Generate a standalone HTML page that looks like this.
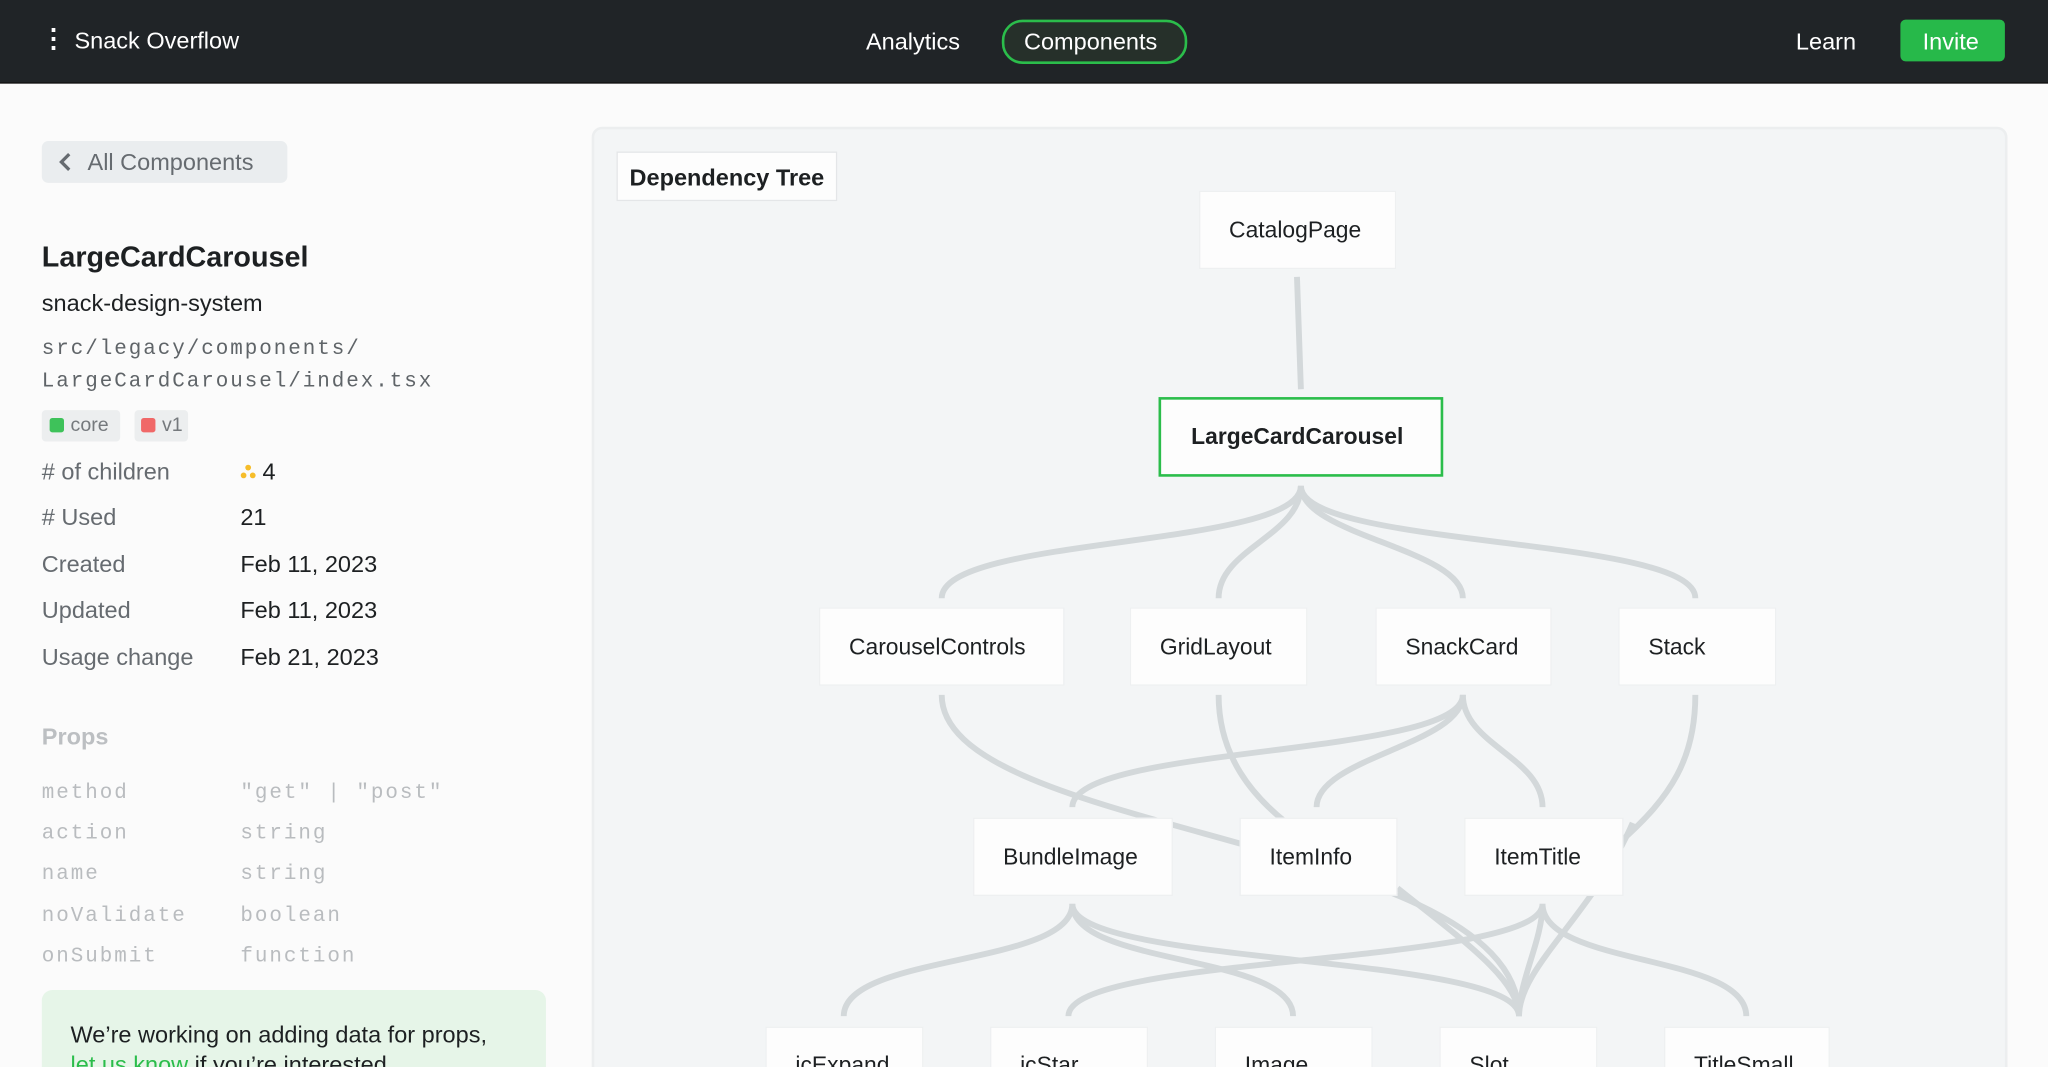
<!DOCTYPE html>
<html><head><meta charset="utf-8"><style>
html,body{margin:0;padding:0;width:2048px;height:1067px;overflow:hidden;background:#fbfbfb;}
#w{position:absolute;left:0;top:0;width:1568px;height:817px;overflow:hidden;transform:scale(1.30612);transform-origin:0 0;font-family:"Liberation Sans",sans-serif;color:#1d2022;}
.a{position:absolute;white-space:nowrap;}
.nav{position:absolute;left:0;top:0;width:1568px;height:63px;background:#202427;border-bottom:1px solid #111;}
.nav .a{color:#fff;font-size:18px;}
.lbl{color:#666b70;font-size:18px;}
.val{color:#1d2022;font-size:18px;}
.mono{font-family:"Liberation Mono",monospace;color:#5f6468;font-size:16px;letter-spacing:1.5px;}
.pm{font-family:"Liberation Mono",monospace;color:#b9bcbf;font-size:16px;letter-spacing:1.5px;}
.panel{position:absolute;left:453px;top:97px;width:1080px;height:760px;background:#f3f5f6;border:2px solid #eceeef;border-radius:8px;}
.n{position:absolute;background:#fdfdfd;border:1px solid #eef0f1;font-size:17.5px;color:#1d2022;box-sizing:border-box;padding-left:22px;display:flex;align-items:center;height:60px;}
</style></head><body><div id="w">
<div class="nav">
 <div class="a" style="left:31px;top:19px;font-size:20px;color:#fff;font-weight:bold;line-height:22px">⋮</div>
 <div class="a" style="left:57px;top:21px">Snack Overflow</div>
 <div class="a" style="left:663px;top:22px">Analytics</div>
 <div class="a" style="left:767px;top:15px;width:138px;height:30px;border:2px solid #2bbd4b;border-radius:16px;background:#26302a;"></div>
 <div class="a" style="left:784px;top:22px">Components</div>
 <div class="a" style="left:1375px;top:22px">Learn</div>
 <div class="a" style="left:1455px;top:15px;width:80px;height:32px;background:#27b94a;border-radius:4px;"></div>
 <div class="a" style="left:1472px;top:22px">Invite</div>
</div>
<div class="a" style="left:32px;top:108px;width:188px;height:32px;background:#eaedef;border-radius:5px;"></div>
<svg class="a" style="left:44px;top:116px" width="14" height="16"><path d="M9 2 L3 8 L9 14" stroke="#666b70" stroke-width="2.5" fill="none"/></svg>
<div class="a lbl" style="left:67px;top:114px">All Components</div>
<div class="a" style="left:32px;top:184px;font-size:22px;font-weight:bold;color:#1d2022">LargeCardCarousel</div>
<div class="a val" style="left:32px;top:222px">snack-design-system</div>
<div class="a mono" style="left:32px;top:258px">src/legacy/components/</div>
<div class="a mono" style="left:32px;top:283px">LargeCardCarousel/index.tsx</div>
<div class="a" style="left:32px;top:314px;width:60px;height:24px;background:#eceeef;border-radius:3px"></div>
<div class="a" style="left:38px;top:320px;width:11px;height:11px;background:#3ec25a;border-radius:2px"></div>
<div class="a" style="left:54px;top:317px;font-size:15px;color:#75797d">core</div>
<div class="a" style="left:103px;top:314px;width:41px;height:24px;background:#eceeef;border-radius:3px"></div>
<div class="a" style="left:108px;top:320px;width:11px;height:11px;background:#f06868;border-radius:2px"></div>
<div class="a" style="left:124px;top:317px;font-size:15px;color:#75797d">v1</div>
<div class="a lbl" style="left:32px;top:351px"># of children</div>
<svg class="a" style="left:183px;top:354px" width="14" height="14"><circle cx="7" cy="4" r="2.2" fill="#f6bd2a"/><circle cx="3.5" cy="10" r="2.2" fill="#f6bd2a"/><circle cx="10.5" cy="10" r="2.2" fill="#f6bd2a"/></svg>
<div class="a val" style="left:201px;top:351px">4</div>
<div class="a lbl" style="left:32px;top:386px"># Used</div><div class="a val" style="left:184px;top:386px">21</div>
<div class="a lbl" style="left:32px;top:422px">Created</div><div class="a val" style="left:184px;top:422px">Feb 11, 2023</div>
<div class="a lbl" style="left:32px;top:457px">Updated</div><div class="a val" style="left:184px;top:457px">Feb 11, 2023</div>
<div class="a lbl" style="left:32px;top:493px">Usage change</div><div class="a val" style="left:184px;top:493px">Feb 21, 2023</div>
<div class="a" style="left:32px;top:554px;font-size:18px;font-weight:bold;color:#bcbfc2">Props</div>
<div class="a pm" style="left:32px;top:598px">method</div><div class="a pm" style="left:184px;top:598px">"get" | "post"</div>
<div class="a pm" style="left:32px;top:629px">action</div><div class="a pm" style="left:184px;top:629px">string</div>
<div class="a pm" style="left:32px;top:660px">name</div><div class="a pm" style="left:184px;top:660px">string</div>
<div class="a pm" style="left:32px;top:692px">noValidate</div><div class="a pm" style="left:184px;top:692px">boolean</div>
<div class="a pm" style="left:32px;top:723px">onSubmit</div><div class="a pm" style="left:184px;top:723px">function</div>
<div class="a" style="left:32px;top:758px;width:386px;height:80px;background:#e6f5e8;border-radius:8px"></div>
<div class="a val" style="left:54px;top:782px">We’re working on adding data for props,</div>
<div class="a val" style="left:54px;top:805px"><span style="color:#2bbd4b">let us know</span> if you’re interested</div>

<div class="panel"></div>
<div class="a" style="left:472px;top:116px;width:169px;height:38px;background:#fdfdfd;border:1px solid #e4e6e8;box-sizing:border-box"></div>
<div class="a" style="left:482px;top:126px;font-size:18px;font-weight:bold;color:#1d2022">Dependency Tree</div>
<svg class="a" style="left:0;top:0" width="1568" height="817" fill="none" stroke="#d3d8da" stroke-width="4.5">
<path d="M993 212 L996 298"/>
<path d="M996 372 C996 420 721 410 721 458"/>
<path d="M996 372 C996 410 933 420 933 458"/>
<path d="M996 372 C996 410 1120 420 1120 458"/>
<path d="M996 372 C996 420 1298 410 1298 458"/>
<path d="M721 532 C721 640 1163 640 1163 778"/>
<path d="M933 532 C933 580 960 610 985 630"/>
<path d="M1120 532 C1120 580 821 570 821 618"/>
<path d="M1120 532 C1120 570 1008 580 1008 618"/>
<path d="M1120 532 C1120 570 1181 580 1181 618"/>
<path d="M1298 532 C1298 580 1280 610 1240 645"/>
<path d="M821 692 C821 740 646 730 646 778"/>
<path d="M821 692 C821 740 990 730 990 778"/>
<path d="M821 692 C821 740 1163 730 1163 778"/>
<path d="M1181 692 C1181 740 818 730 818 778"/>
<path d="M1181 692 C1181 720 1163 750 1163 778"/>
<path d="M1181 692 C1181 740 1337 730 1337 778"/>
<path d="M1070 680 C1120 720 1163 750 1163 778"/>
<path d="M1250 630 C1220 700 1163 740 1163 778"/>
</svg>
<div class="n" style="left:918px;top:146px;width:151px">CatalogPage</div>
<div class="n" style="left:887px;top:304px;width:218px;height:61px;border:2px solid #2bbd4b;font-weight:bold;padding-left:23px">LargeCardCarousel</div>
<div class="n" style="left:627px;top:465px;width:188px">CarouselControls</div>
<div class="n" style="left:865px;top:465px;width:136px">GridLayout</div>
<div class="n" style="left:1053px;top:465px;width:135px">SnackCard</div>
<div class="n" style="left:1239px;top:465px;width:121px">Stack</div>
<div class="n" style="left:745px;top:626px;width:153px">BundleImage</div>
<div class="n" style="left:949px;top:626px;width:121px">ItemInfo</div>
<div class="n" style="left:1121px;top:626px;width:122px">ItemTitle</div>
<div class="n" style="left:586px;top:786px;width:121px;align-items:flex-start;padding-top:18px">icExpand</div>
<div class="n" style="left:758px;top:786px;width:121px;align-items:flex-start;padding-top:18px">icStar</div>
<div class="n" style="left:930px;top:786px;width:121px;align-items:flex-start;padding-top:18px">Image</div>
<div class="n" style="left:1102px;top:786px;width:121px;align-items:flex-start;padding-top:18px">Slot</div>
<div class="n" style="left:1274px;top:786px;width:127px;align-items:flex-start;padding-top:18px">TitleSmall</div>
</div></body></html>
